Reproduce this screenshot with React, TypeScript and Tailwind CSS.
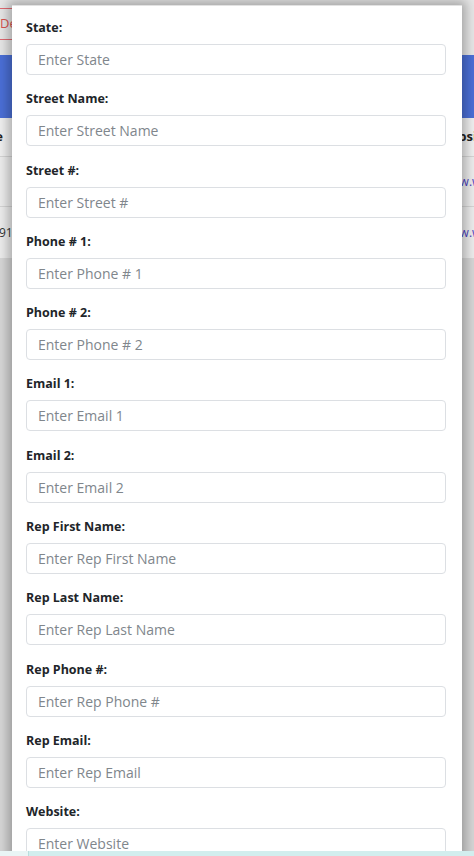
import React from "react";

const fields = [
  "State",
  "Street Name",
  "Street #",
  "Phone # 1",
  "Phone # 2",
  "Email 1",
  "Email 2",
  "Rep First Name",
  "Rep Last Name",
  "Rep Phone #",
  "Rep Email",
  "Website",
];

export default function App() {
  return (
    <div
      className="relative w-[474px] h-[856px] overflow-hidden bg-[#d6d6d6]"
      style={{ fontFamily: '"Open Sans", "Noto Sans", sans-serif' }}
    >
      {/* background page */}
      <div className="flex flex-col">
        <div className="h-[55px] bg-[#e6e6e6] pt-[8px]">
          <div className="-ml-[12px] w-[80px] h-[32px] border border-[#e06a72] rounded-[3px] text-[#d9534f] text-[13px] flex items-center pl-[11px]">
            Delete
          </div>
        </div>
        <div className="h-[63px] bg-[#4b6fd6]" />
        <div className="h-[39px] bg-[#efefef] border-b border-[#d4d4d4] flex items-center text-[13px] font-bold text-[#222] whitespace-nowrap">
          <span className="-ml-[36px] w-[80px] shrink-0">Name</span>
          <span className="ml-[394px] shrink-0">Website</span>
        </div>
        <div className="h-[50px] bg-[#ececec] border-b border-[#d4d4d4] flex items-center text-[12px] text-[#4a3fc0] whitespace-nowrap">
          <span className="ml-[441px] shrink-0">www.website.com</span>
        </div>
        <div className="h-[51px] bg-[#ececec] flex items-center text-[12px] whitespace-nowrap">
          <span className="-ml-[1px] w-[60px] shrink-0 text-[#333]">9134</span>
          <span className="ml-[382px] shrink-0 text-[#4a3fc0]">www.website.com</span>
        </div>
      </div>

      {/* modal */}
      <div className="absolute left-[12px] top-[5px] w-[450px] h-[900px] bg-white border-t border-[#e2e2e2] shadow-[0_0_10px_4px_rgba(0,0,0,0.28)] px-[14px] pt-[14px]">
        <div className="flex flex-col w-[420px]">
          {fields.map((f) => (
            <div key={f} className="flex flex-col mb-[16.3px]">
              <label className="text-[12.5px] leading-[16px] font-bold text-[#212529] mb-[8px]">
                {f}:
              </label>
              <div className="h-[31px] rounded-[4px] border border-[#dcdfe3] flex items-center px-[11px] text-[14px] text-[#80868c]">
                Enter {f}
              </div>
            </div>
          ))}
        </div>
      </div>

      {/* bottom bar */}
      <div className="absolute left-0 bottom-0 w-[474px] h-[5px] flex">
        <div className="w-[29px] bg-[#e9f5f5] border-r border-[#b8dede]" />
        <div className="flex-1 bg-[#d2eeee]" />
      </div>
    </div>
  );
}
